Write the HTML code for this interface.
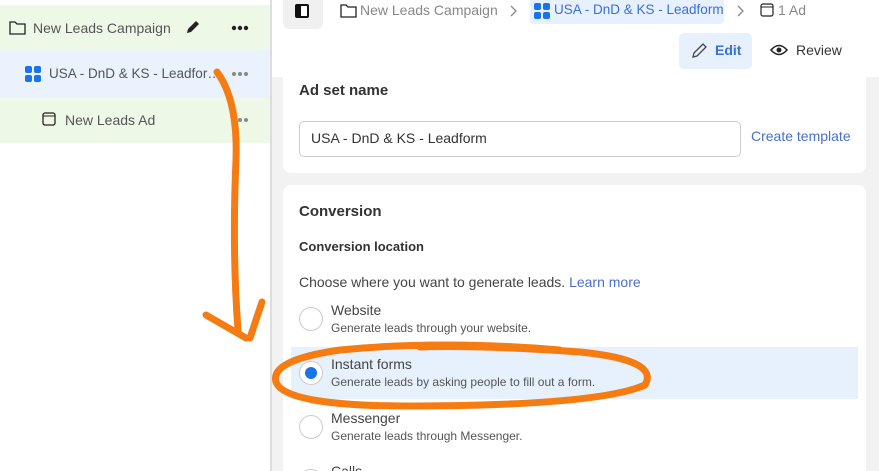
<!DOCTYPE html>
<html style="overflow:hidden;width:879px;height:471px"><head><style>
*{margin:0;padding:0;box-sizing:border-box}
body{width:879px;height:471px;overflow:hidden;font-family:"Liberation Sans",sans-serif;background:#fff;position:relative}
.a{position:absolute}
.t{color:#555;font-size:14px}
</style></head><body>
<div class="a" style="left:0;top:0;width:270px;height:471px;background:#fff"></div>
<div class="a" style="left:0;top:5px;width:270px;height:45px;background:#eef8e7"></div>
<div class="a" style="left:0;top:50px;width:270px;height:47px;background:#e9f2fd"></div>
<div class="a" style="left:0;top:97px;width:270px;height:46px;background:#eef8e7"></div>
<div class="a" style="left:270px;top:0;width:2px;height:471px;background:#ddd"></div>
<svg class="a" style="left:9px;top:20px" width="17" height="15"><path d="M1 2h5l2 2h8v10H1z" fill="none" stroke="#222" stroke-width="1.3"/></svg>
<div class="a t" style="left:33px;top:20px;font-size:14px">New Leads Campaign</div>
<svg class="a" style="left:185px;top:19px" width="16" height="16"><path d="M2 14l1-4 8-8 3 3-8 8z" fill="#222"/></svg>
<svg class="a" style="left:231px;top:25px" width="18" height="6"><circle cx="3" cy="3" r="2.2" fill="#222"/><circle cx="9" cy="3" r="2.2" fill="#222"/><circle cx="15" cy="3" r="2.2" fill="#222"/></svg>
<svg class="a" style="left:25px;top:66px" width="16" height="16"><rect x="0" y="0" width="7" height="7" rx="2" fill="#1a73e8"/><rect x="9" y="0" width="7" height="7" rx="2" fill="#1a73e8"/><rect x="0" y="9" width="7" height="7" rx="2" fill="#1a73e8"/><rect x="9" y="9" width="7" height="7" rx="2" fill="#1a73e8"/></svg>
<div class="a t" style="left:49px;top:66px;font-size:13.5px">USA - DnD &amp; KS - Leadfor…</div>
<svg class="a" style="left:231px;top:71px" width="18" height="6"><circle cx="3" cy="3" r="2" fill="#888"/><circle cx="9" cy="3" r="2" fill="#888"/><circle cx="15" cy="3" r="2" fill="#888"/></svg>
<svg class="a" style="left:42px;top:112px" width="15" height="15"><rect x="1" y="1" width="12" height="12" rx="2" fill="none" stroke="#222" stroke-width="1.3"/><path d="M1 4h12" stroke="#222"/></svg>
<div class="a t" style="left:65px;top:112px">New Leads Ad</div>
<svg class="a" style="left:231px;top:117px" width="18" height="6"><circle cx="3" cy="3" r="2" fill="#888"/><circle cx="9" cy="3" r="2" fill="#888"/><circle cx="15" cy="3" r="2" fill="#888"/></svg>
<div class="a" style="left:272px;top:77px;width:607px;height:394px;background:#f2f2f2"></div>
<div class="a" style="left:283px;top:0;width:40px;height:29px;background:#f0f0f0;border-radius:0 0 6px 6px"></div>
<svg class="a" style="left:294px;top:3px" width="16" height="16"><rect x="1" y="1" width="14" height="14" rx="2" fill="#111"/><rect x="7" y="3" width="6" height="10" fill="#fff"/></svg>
<svg class="a" style="left:340px;top:3px" width="17" height="15"><path d="M1 2h5l2 2h8v10H1z" fill="none" stroke="#222" stroke-width="1.3"/></svg>
<div class="a t" style="left:360px;top:2px;color:#888">New Leads Campaign</div>
<svg class="a" style="left:510px;top:5px" width="8" height="12"><path d="M1 1l5 5-5 5" fill="none" stroke="#888" stroke-width="1.3"/></svg>
<div class="a" style="left:530px;top:0;width:194px;height:24px;background:#e7f0fd;border-radius:0 0 4px 4px"></div>
<svg class="a" style="left:534px;top:3px" width="16" height="16"><rect x="0" y="0" width="7" height="7" rx="2" fill="#1a73e8"/><rect x="9" y="0" width="7" height="7" rx="2" fill="#1a73e8"/><rect x="0" y="9" width="7" height="7" rx="2" fill="#1a73e8"/><rect x="9" y="9" width="7" height="7" rx="2" fill="#1a73e8"/></svg>
<div class="a t" style="left:554px;top:2px;color:#3a6fd8;font-size:13.5px">USA - DnD &amp; KS - Leadform</div>
<svg class="a" style="left:737px;top:5px" width="8" height="12"><path d="M1 1l5 5-5 5" fill="none" stroke="#888" stroke-width="1.3"/></svg>
<svg class="a" style="left:760px;top:3px" width="14" height="15"><rect x="1" y="1" width="12" height="12" rx="2" fill="none" stroke="#222" stroke-width="1.2"/><path d="M1 4h12" stroke="#222"/></svg>
<div class="a t" style="left:778px;top:2px;color:#888">1 Ad</div>
<div class="a" style="left:679px;top:33px;width:73px;height:36px;background:#e7f0fd;border-radius:5px"></div>
<svg class="a" style="left:691px;top:42px" width="17" height="17"><path d="M2 15l1-4 9-9 3 3-9 9z" fill="none" stroke="#444" stroke-width="1.3"/></svg>
<div class="a" style="left:715px;top:42px;font-size:14px;font-weight:bold;color:#3a6fd8">Edit</div>
<svg class="a" style="left:770px;top:43px" width="18" height="14"><path d="M1 7Q9-2 17 7Q9 16 1 7z" fill="none" stroke="#222" stroke-width="1.5"/><circle cx="9" cy="7" r="2.5" fill="#222"/></svg>
<div class="a t" style="left:796px;top:42px;color:#333">Review</div>
<div class="a" style="left:283px;top:77px;width:583px;height:96px;background:#fff;border-radius:0 0 8px 8px"></div>
<div class="a" style="left:299px;top:82px;font-size:15px;font-weight:bold;color:#333">Ad set name</div>
<div class="a" style="left:299px;top:121px;width:442px;height:36px;border:1px solid #ccc;border-radius:5px;background:#fff"></div>
<div class="a t" style="left:311px;top:130px;color:#333">USA - DnD &amp; KS - Leadform</div>
<div class="a t" style="left:751px;top:128px;color:#4a6fc8">Create template</div>
<div class="a" style="left:283px;top:185px;width:583px;height:300px;background:#fff;border-radius:8px"></div>
<div class="a" style="left:299px;top:203px;font-size:15px;font-weight:bold;color:#333">Conversion</div>
<div class="a" style="left:299px;top:239px;font-size:13px;font-weight:bold;color:#333">Conversion location</div>
<div class="a t" style="left:299px;top:274px;color:#444">Choose where you want to generate leads. <span style="color:#4a6fc8">Learn more</span></div>
<div class="a" style="left:291px;top:347px;width:567px;height:52px;background:#e7f0fd"></div>
<div class="a" style="left:299px;top:307px;width:24px;height:24px;border:1px solid #ccc;border-radius:50%;background:#fff"></div>
<div class="a t" style="left:331px;top:302px;color:#444">Website</div>
<div class="a" style="left:331px;top:321px;font-size:12px;color:#555">Generate leads through your website.</div>
<div class="a" style="left:299px;top:361px;width:24px;height:24px;border:1px solid #ccc;border-radius:50%;background:#fff"></div>
<div class="a" style="left:305px;top:367px;width:12px;height:12px;border-radius:50%;background:#1a73e8"></div>
<div class="a t" style="left:331px;top:356px;color:#444">Instant forms</div>
<div class="a" style="left:331px;top:375px;font-size:12px;color:#555">Generate leads by asking people to fill out a form.</div>
<div class="a" style="left:299px;top:415px;width:24px;height:24px;border:1px solid #ccc;border-radius:50%;background:#fff"></div>
<div class="a t" style="left:331px;top:410px;color:#444">Messenger</div>
<div class="a" style="left:331px;top:429px;font-size:12px;color:#555">Generate leads through Messenger.</div>
<div class="a" style="left:299px;top:469px;width:24px;height:24px;border:1px solid #ccc;border-radius:50%;background:#fff"></div>
<div class="a t" style="left:331px;top:463px;color:#444">Calls</div>
<svg class="a" style="left:0;top:0" width="879" height="471"><g fill="none" stroke="#f57c13" stroke-width="7" stroke-linecap="round" stroke-linejoin="round">
<path d="M217 72Q238 100 236 160Q232 250 238 330"/>
<path d="M206 315L246 338"/><path d="M250 338L262 302"/>
<path d="M560 350Q440 340 340 350Q270 360 276 382Q285 407 420 406Q600 405 645 385Q660 360 580 352Q480 345 420 347"/>
</g></svg>
</body></html>
